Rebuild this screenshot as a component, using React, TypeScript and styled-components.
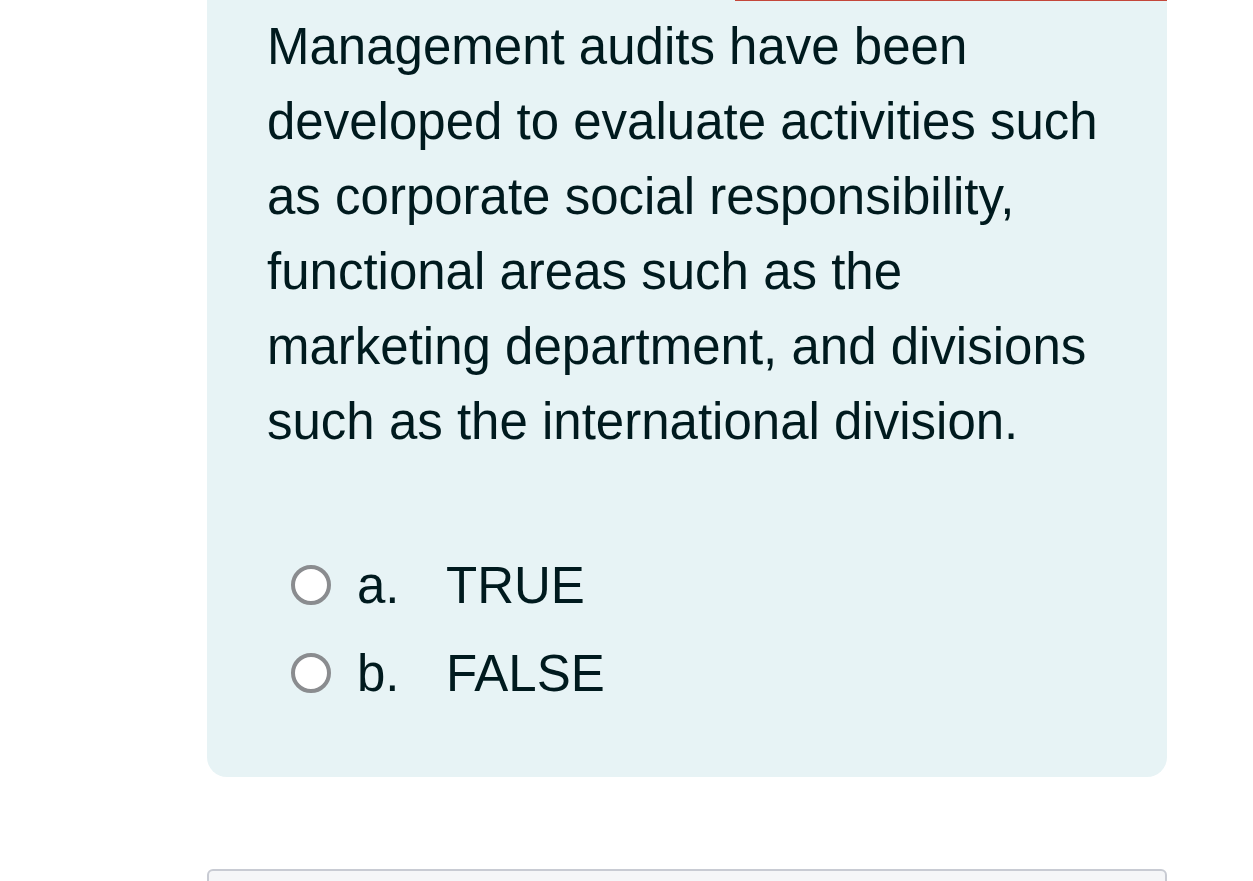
import styled, { createGlobalStyle } from 'styled-components';

const GlobalStyle = createGlobalStyle`
  html, body {
    margin: 0;
    padding: 0;
    background: #ffffff;
    font-family: "Liberation Sans", Arial, sans-serif;
    color: #001a1e;
    overflow: hidden;
  }
`;

const Page = styled.div`
  width: 960px;
  margin-left: 207px;
  display: flex;
  flex-direction: column;
`;

// tail of the block above, only its red bottom border shows
const TopEdge = styled.div`
  height: 1px;
  background: #e7f3f5;
  display: flex;
`;

const RedRule = styled.div`
  margin-left: 528px;
  flex: 1;
  background: #c4463a;
`;

const Formulation = styled.div`
  background: #e7f3f5;
  border-radius: 0 0 20px 20px;
  padding: 8px 40px 60px 60px;
`;

const QuestionText = styled.p`
  margin: 0;
  font-size: 51px;
  line-height: 75px;
`;

const Answers = styled.div`
  margin-top: 82px;
  display: flex;
  flex-direction: column;
`;

const Option = styled.label`
  display: flex;
  align-items: center;
  height: 88px;
  padding-left: 24px;
  font-size: 51px;
  cursor: pointer;
`;

const Radio = styled.span`
  box-sizing: border-box;
  width: 40px;
  height: 40px;
  border-radius: 50%;
  border: 4px solid #8a8c8f;
  background: #ffffff;
  margin-right: 26px;
  flex-shrink: 0;
`;

const Letter = styled.span`
  width: 89px;
`;

const NextBox = styled.div`
  margin-top: 92px;
  height: 40px;
  border: 2px solid #c8cbd3;
  border-radius: 6px;
  background: #f5f6f8;
`;

const options = [
  { letter: 'a.', text: 'TRUE' },
  { letter: 'b.', text: 'FALSE' },
];

const App = () => {
  return (
    <>
      <GlobalStyle />
      <Page>
        <TopEdge>
          <RedRule />
        </TopEdge>
        <Formulation>
          <QuestionText>
            Management audits have been developed to evaluate activities such as corporate social
            responsibility, functional areas such as the marketing department, and divisions such
            as the international division.
          </QuestionText>
          <Answers>
            {options.map((o) => (
              <Option key={o.letter}>
                <Radio />
                <Letter>{o.letter}</Letter>
                {o.text}
              </Option>
            ))}
          </Answers>
        </Formulation>
        <NextBox />
      </Page>
    </>
  );
};

export default App;
